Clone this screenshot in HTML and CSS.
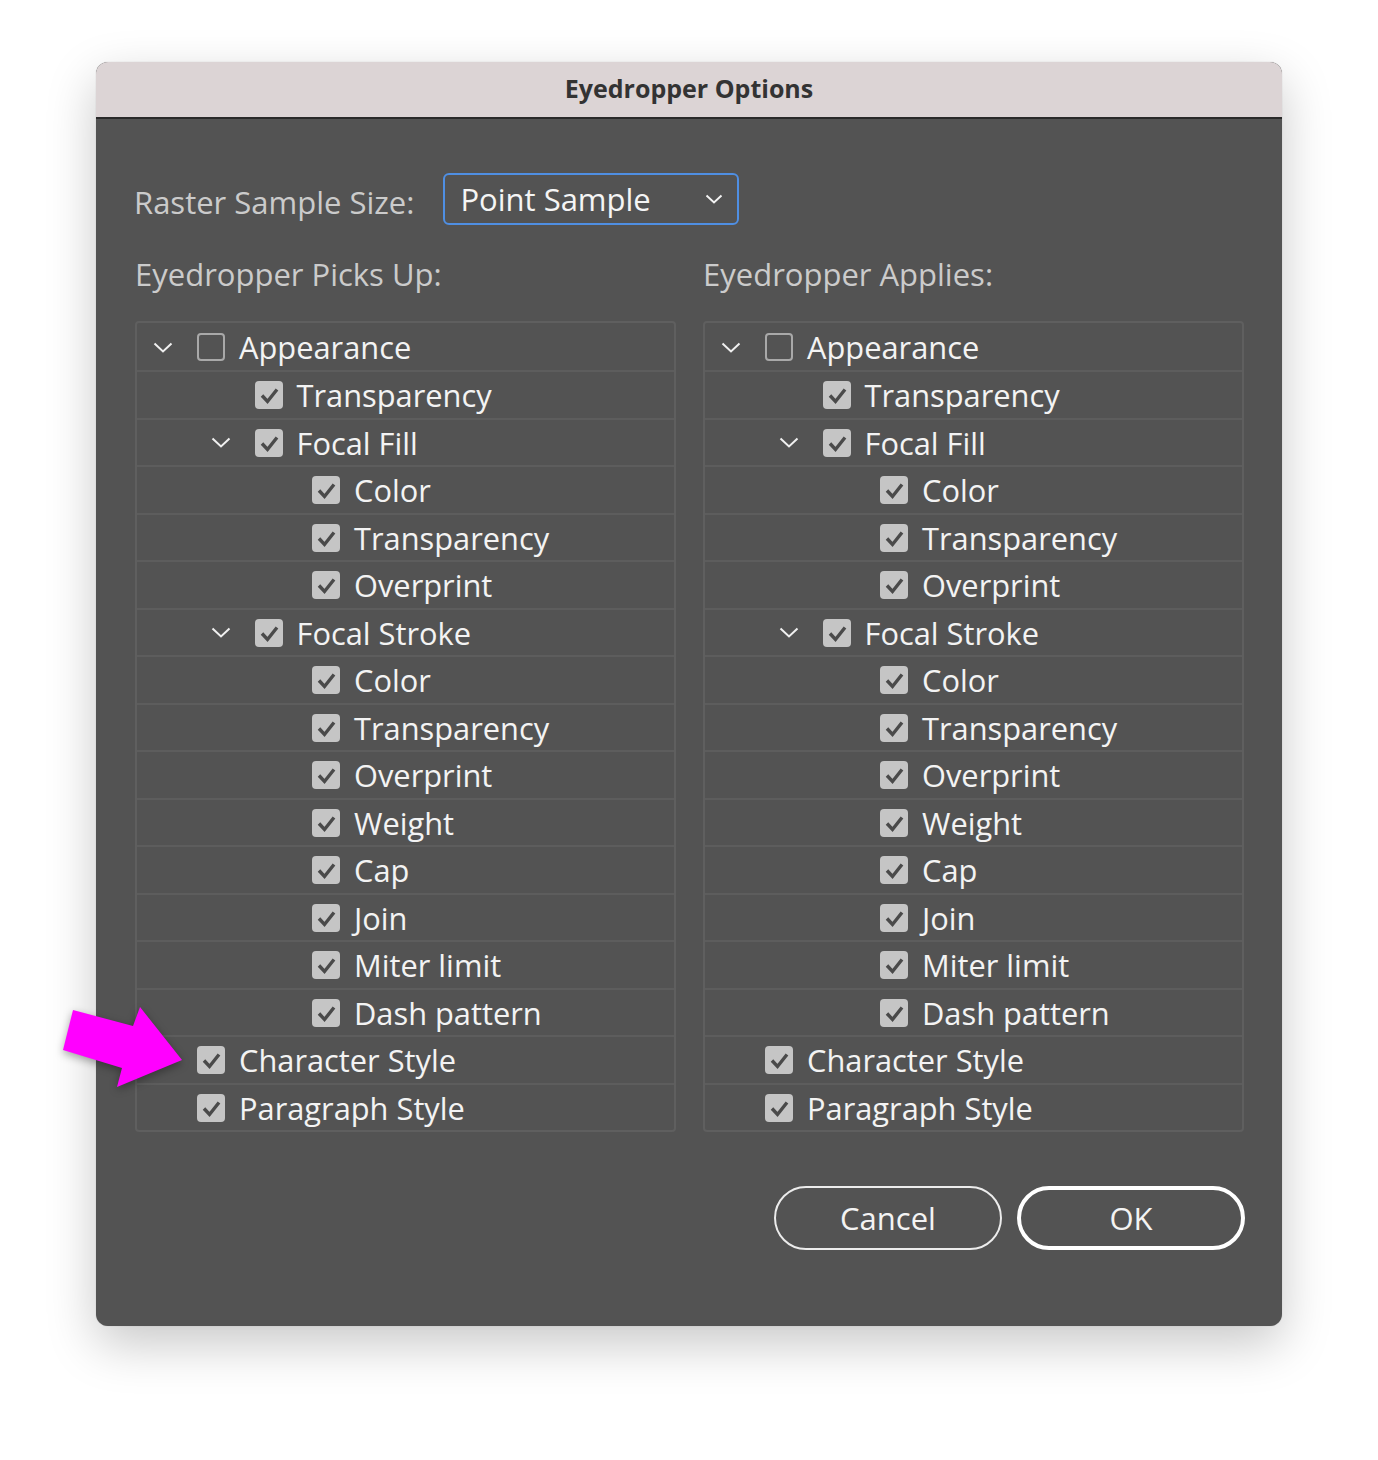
FILE: index.html
```html
<!DOCTYPE html>
<html>
<head>
<meta charset="utf-8">
<title>Eyedropper Options</title>
<link rel="stylesheet" href="styles.css">
</head>
<body>
<div class="dialog">
  <div class="titlebar">Eyedropper Options</div>
  <div class="content">
    <div class="raster">
      <span class="label">Raster Sample Size:</span>
      <div class="select">
        <span>Point Sample</span>
        <svg class="sel-chev" width="18" height="10" viewBox="0 0 18 10"><path d="M1.5 1.5 L9 8.5 L16.5 1.5" fill="none" stroke="#f2f2f2" stroke-width="2"/></svg>
      </div>
    </div>
    <div class="columns">
      <div class="col">
        <div class="heading">Eyedropper Picks Up:</div>
        <div class="panel">
          <div class="row l0"><span class="chev"><svg width="20" height="11" viewBox="0 0 20 11"><path d="M1.5 1.5 L10 9.5 L18.5 1.5" fill="none" stroke="#f0f0f0" stroke-width="2"/></svg></span><span class="cb"></span><span class="txt">Appearance</span></div>
          <div class="row l1"><span class="chev"></span><span class="cb on"><svg viewBox="0 0 28 28"><path d="M7 14.5 L12.5 20.5 L22 8.5" fill="none" stroke="#4a4a4a" stroke-width="3.4"/></svg></span><span class="txt">Transparency</span></div>
          <div class="row l1"><span class="chev"><svg width="20" height="11" viewBox="0 0 20 11"><path d="M1.5 1.5 L10 9.5 L18.5 1.5" fill="none" stroke="#f0f0f0" stroke-width="2"/></svg></span><span class="cb on"><svg viewBox="0 0 28 28"><path d="M7 14.5 L12.5 20.5 L22 8.5" fill="none" stroke="#4a4a4a" stroke-width="3.4"/></svg></span><span class="txt">Focal Fill</span></div>
          <div class="row l2"><span class="chev"></span><span class="cb on"><svg viewBox="0 0 28 28"><path d="M7 14.5 L12.5 20.5 L22 8.5" fill="none" stroke="#4a4a4a" stroke-width="3.4"/></svg></span><span class="txt">Color</span></div>
          <div class="row l2"><span class="chev"></span><span class="cb on"><svg viewBox="0 0 28 28"><path d="M7 14.5 L12.5 20.5 L22 8.5" fill="none" stroke="#4a4a4a" stroke-width="3.4"/></svg></span><span class="txt">Transparency</span></div>
          <div class="row l2"><span class="chev"></span><span class="cb on"><svg viewBox="0 0 28 28"><path d="M7 14.5 L12.5 20.5 L22 8.5" fill="none" stroke="#4a4a4a" stroke-width="3.4"/></svg></span><span class="txt">Overprint</span></div>
          <div class="row l1"><span class="chev"><svg width="20" height="11" viewBox="0 0 20 11"><path d="M1.5 1.5 L10 9.5 L18.5 1.5" fill="none" stroke="#f0f0f0" stroke-width="2"/></svg></span><span class="cb on"><svg viewBox="0 0 28 28"><path d="M7 14.5 L12.5 20.5 L22 8.5" fill="none" stroke="#4a4a4a" stroke-width="3.4"/></svg></span><span class="txt">Focal Stroke</span></div>
          <div class="row l2"><span class="chev"></span><span class="cb on"><svg viewBox="0 0 28 28"><path d="M7 14.5 L12.5 20.5 L22 8.5" fill="none" stroke="#4a4a4a" stroke-width="3.4"/></svg></span><span class="txt">Color</span></div>
          <div class="row l2"><span class="chev"></span><span class="cb on"><svg viewBox="0 0 28 28"><path d="M7 14.5 L12.5 20.5 L22 8.5" fill="none" stroke="#4a4a4a" stroke-width="3.4"/></svg></span><span class="txt">Transparency</span></div>
          <div class="row l2"><span class="chev"></span><span class="cb on"><svg viewBox="0 0 28 28"><path d="M7 14.5 L12.5 20.5 L22 8.5" fill="none" stroke="#4a4a4a" stroke-width="3.4"/></svg></span><span class="txt">Overprint</span></div>
          <div class="row l2"><span class="chev"></span><span class="cb on"><svg viewBox="0 0 28 28"><path d="M7 14.5 L12.5 20.5 L22 8.5" fill="none" stroke="#4a4a4a" stroke-width="3.4"/></svg></span><span class="txt">Weight</span></div>
          <div class="row l2"><span class="chev"></span><span class="cb on"><svg viewBox="0 0 28 28"><path d="M7 14.5 L12.5 20.5 L22 8.5" fill="none" stroke="#4a4a4a" stroke-width="3.4"/></svg></span><span class="txt">Cap</span></div>
          <div class="row l2"><span class="chev"></span><span class="cb on"><svg viewBox="0 0 28 28"><path d="M7 14.5 L12.5 20.5 L22 8.5" fill="none" stroke="#4a4a4a" stroke-width="3.4"/></svg></span><span class="txt">Join</span></div>
          <div class="row l2"><span class="chev"></span><span class="cb on"><svg viewBox="0 0 28 28"><path d="M7 14.5 L12.5 20.5 L22 8.5" fill="none" stroke="#4a4a4a" stroke-width="3.4"/></svg></span><span class="txt">Miter limit</span></div>
          <div class="row l2"><span class="chev"></span><span class="cb on"><svg viewBox="0 0 28 28"><path d="M7 14.5 L12.5 20.5 L22 8.5" fill="none" stroke="#4a4a4a" stroke-width="3.4"/></svg></span><span class="txt">Dash pattern</span></div>
          <div class="row l0"><span class="chev"></span><span class="cb on"><svg viewBox="0 0 28 28"><path d="M7 14.5 L12.5 20.5 L22 8.5" fill="none" stroke="#4a4a4a" stroke-width="3.4"/></svg></span><span class="txt">Character Style</span></div>
          <div class="row l0"><span class="chev"></span><span class="cb on"><svg viewBox="0 0 28 28"><path d="M7 14.5 L12.5 20.5 L22 8.5" fill="none" stroke="#4a4a4a" stroke-width="3.4"/></svg></span><span class="txt">Paragraph Style</span></div>
        </div>
      </div>
      <div class="col">
        <div class="heading">Eyedropper Applies:</div>
        <div class="panel">
          <div class="row l0"><span class="chev"><svg width="20" height="11" viewBox="0 0 20 11"><path d="M1.5 1.5 L10 9.5 L18.5 1.5" fill="none" stroke="#f0f0f0" stroke-width="2"/></svg></span><span class="cb"></span><span class="txt">Appearance</span></div>
          <div class="row l1"><span class="chev"></span><span class="cb on"><svg viewBox="0 0 28 28"><path d="M7 14.5 L12.5 20.5 L22 8.5" fill="none" stroke="#4a4a4a" stroke-width="3.4"/></svg></span><span class="txt">Transparency</span></div>
          <div class="row l1"><span class="chev"><svg width="20" height="11" viewBox="0 0 20 11"><path d="M1.5 1.5 L10 9.5 L18.5 1.5" fill="none" stroke="#f0f0f0" stroke-width="2"/></svg></span><span class="cb on"><svg viewBox="0 0 28 28"><path d="M7 14.5 L12.5 20.5 L22 8.5" fill="none" stroke="#4a4a4a" stroke-width="3.4"/></svg></span><span class="txt">Focal Fill</span></div>
          <div class="row l2"><span class="chev"></span><span class="cb on"><svg viewBox="0 0 28 28"><path d="M7 14.5 L12.5 20.5 L22 8.5" fill="none" stroke="#4a4a4a" stroke-width="3.4"/></svg></span><span class="txt">Color</span></div>
          <div class="row l2"><span class="chev"></span><span class="cb on"><svg viewBox="0 0 28 28"><path d="M7 14.5 L12.5 20.5 L22 8.5" fill="none" stroke="#4a4a4a" stroke-width="3.4"/></svg></span><span class="txt">Transparency</span></div>
          <div class="row l2"><span class="chev"></span><span class="cb on"><svg viewBox="0 0 28 28"><path d="M7 14.5 L12.5 20.5 L22 8.5" fill="none" stroke="#4a4a4a" stroke-width="3.4"/></svg></span><span class="txt">Overprint</span></div>
          <div class="row l1"><span class="chev"><svg width="20" height="11" viewBox="0 0 20 11"><path d="M1.5 1.5 L10 9.5 L18.5 1.5" fill="none" stroke="#f0f0f0" stroke-width="2"/></svg></span><span class="cb on"><svg viewBox="0 0 28 28"><path d="M7 14.5 L12.5 20.5 L22 8.5" fill="none" stroke="#4a4a4a" stroke-width="3.4"/></svg></span><span class="txt">Focal Stroke</span></div>
          <div class="row l2"><span class="chev"></span><span class="cb on"><svg viewBox="0 0 28 28"><path d="M7 14.5 L12.5 20.5 L22 8.5" fill="none" stroke="#4a4a4a" stroke-width="3.4"/></svg></span><span class="txt">Color</span></div>
          <div class="row l2"><span class="chev"></span><span class="cb on"><svg viewBox="0 0 28 28"><path d="M7 14.5 L12.5 20.5 L22 8.5" fill="none" stroke="#4a4a4a" stroke-width="3.4"/></svg></span><span class="txt">Transparency</span></div>
          <div class="row l2"><span class="chev"></span><span class="cb on"><svg viewBox="0 0 28 28"><path d="M7 14.5 L12.5 20.5 L22 8.5" fill="none" stroke="#4a4a4a" stroke-width="3.4"/></svg></span><span class="txt">Overprint</span></div>
          <div class="row l2"><span class="chev"></span><span class="cb on"><svg viewBox="0 0 28 28"><path d="M7 14.5 L12.5 20.5 L22 8.5" fill="none" stroke="#4a4a4a" stroke-width="3.4"/></svg></span><span class="txt">Weight</span></div>
          <div class="row l2"><span class="chev"></span><span class="cb on"><svg viewBox="0 0 28 28"><path d="M7 14.5 L12.5 20.5 L22 8.5" fill="none" stroke="#4a4a4a" stroke-width="3.4"/></svg></span><span class="txt">Cap</span></div>
          <div class="row l2"><span class="chev"></span><span class="cb on"><svg viewBox="0 0 28 28"><path d="M7 14.5 L12.5 20.5 L22 8.5" fill="none" stroke="#4a4a4a" stroke-width="3.4"/></svg></span><span class="txt">Join</span></div>
          <div class="row l2"><span class="chev"></span><span class="cb on"><svg viewBox="0 0 28 28"><path d="M7 14.5 L12.5 20.5 L22 8.5" fill="none" stroke="#4a4a4a" stroke-width="3.4"/></svg></span><span class="txt">Miter limit</span></div>
          <div class="row l2"><span class="chev"></span><span class="cb on"><svg viewBox="0 0 28 28"><path d="M7 14.5 L12.5 20.5 L22 8.5" fill="none" stroke="#4a4a4a" stroke-width="3.4"/></svg></span><span class="txt">Dash pattern</span></div>
          <div class="row l0"><span class="chev"></span><span class="cb on"><svg viewBox="0 0 28 28"><path d="M7 14.5 L12.5 20.5 L22 8.5" fill="none" stroke="#4a4a4a" stroke-width="3.4"/></svg></span><span class="txt">Character Style</span></div>
          <div class="row l0"><span class="chev"></span><span class="cb on"><svg viewBox="0 0 28 28"><path d="M7 14.5 L12.5 20.5 L22 8.5" fill="none" stroke="#4a4a4a" stroke-width="3.4"/></svg></span><span class="txt">Paragraph Style</span></div>
        </div>
      </div>
    </div>
    <div class="buttons">
      <button class="btn">Cancel</button>
      <button class="btn primary">OK</button>
    </div>
  </div>
</div>
<svg class="arrow" width="140" height="100" viewBox="0 0 140 100">
  <polygon points="18,10 78,26 85,7 127,60 62,87 67,68 8,50" fill="#ff00ff"/>
</svg>
</body>
</html>
```
FILE: styles.css
```css
html, body {
  margin: 0;
  padding: 0;
  background: #ffffff;
}
body {
  position: relative;
  width: 1378px;
  height: 1460px;
  font-family: "Open Sans", "Noto Sans", sans-serif;
}
.dialog {
  position: relative;
  margin: 62px 0 0 96px;
  width: 1186px;
  height: 1264px;
  background: #535353;
  border-radius: 12px;
  overflow: hidden;
  box-shadow: 0 18px 50px rgba(0, 0, 0, 0.22), 0 0 1px rgba(0, 0, 0, 0.3);
  display: flex;
  flex-direction: column;
}
.titlebar {
  height: 55px;
  padding-bottom: 3px;
  box-sizing: border-box;
  background: #dcd4d5;
  border-bottom: 2px solid #2a2a2a;
  display: flex;
  align-items: center;
  justify-content: center;
  font-weight: 700;
  font-size: 25px;
  color: #333333;
  flex-shrink: 0;
  height: 57px;
}
.content {
  padding: 54px 39px 0 38px;
  display: flex;
  flex-direction: column;
}
.raster {
  display: flex;
  align-items: center;
  gap: 29px;
  height: 52px;
}
.label, .heading {
  color: #cbcbcb;
  font-size: 31px;
}
.label {
  padding-top: 6px;
}
.select {
  width: 296px;
  height: 52px;
  box-sizing: border-box;
  border: 2px solid #4f8fe3;
  border-radius: 6px;
  display: flex;
  align-items: center;
  justify-content: space-between;
  padding: 0 14px 0 15px;
  color: #f5f5f5;
  font-size: 31px;
}
.sel-chev {
  display: block;
}
.columns {
  display: grid;
  grid-template-columns: 541px 541px;
  column-gap: 27px;
  margin-top: 29px;
  margin-left: 1px;
}
.heading {
  height: 40px;
  line-height: 40px;
  margin-bottom: 27px;
}
.panel {
  border: 2px solid #5f5f5f;
  border-radius: 4px;
}
.row {
  box-sizing: border-box;
  height: 47.5px;
  display: flex;
  align-items: center;
  border-top: 2px solid #5d5d5d;
  padding-top: 1px;
}
.row:first-child {
  border-top: none;
  height: 47px;
}
.row.l0 { padding-left: 16px; }
.row.l1 { padding-left: 73.5px; }
.row.l2 { padding-left: 131px; }
.chev {
  width: 20px;
  height: 11px;
  margin-right: 24px;
  display: flex;
}
.chev svg { display: block; }
.cb {
  width: 28px;
  height: 28px;
  box-sizing: border-box;
  border: 2px solid #a9a9a9;
  border-radius: 4px;
  flex-shrink: 0;
}
.cb.on {
  border: none;
  background: #c5c5c5;
}
.cb svg {
  display: block;
  width: 28px;
  height: 28px;
}
.txt {
  margin-left: 14px;
  font-size: 30.8px;
  color: #f3f3f3;
  white-space: nowrap;
}
.buttons {
  display: flex;
  justify-content: flex-end;
  gap: 15px;
  margin-top: 54px;
  margin-right: -2px;
}
.btn {
  width: 228px;
  height: 64px;
  box-sizing: border-box;
  border-radius: 32px;
  background: transparent;
  border: 2px solid #ececec;
  color: #f3f3f3;
  font-family: "Open Sans", "Noto Sans", sans-serif;
  font-size: 31px;
  padding: 0;
}
.btn.primary {
  border: 4px solid #ffffff;
}
.arrow {
  position: absolute;
  left: 55px;
  top: 1000px;
  filter: drop-shadow(0 3px 4px rgba(0, 0, 0, 0.35));
}
```
